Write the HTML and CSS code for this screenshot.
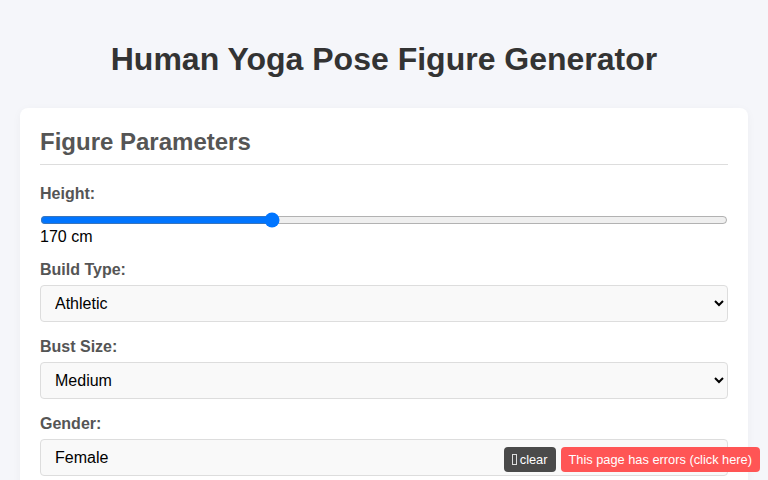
FILE: index.html
```html
<!DOCTYPE html>
<html>
<head>
<meta charset="utf-8">
<title>Human Yoga Pose Figure Generator</title>
<link rel="stylesheet" href="styles.css">
</head>
<body>
<h1 class="title">Human Yoga Pose Figure Generator</h1>
<div class="card">
  <h2 class="card-title">Figure Parameters</h2>
  <div class="group">
    <label class="label" for="height">Height:</label>
    <input class="range" id="height" type="range" min="150" max="210" value="170">
    <span class="value">170 cm</span>
  </div>
  <div class="group">
    <label class="label" for="build">Build Type:</label>
    <select class="select" id="build"><option>Athletic</option></select>
  </div>
  <div class="group">
    <label class="label" for="bust">Bust Size:</label>
    <select class="select" id="bust"><option>Medium</option></select>
  </div>
  <div class="group">
    <label class="label" for="gender">Gender:</label>
    <select class="select" id="gender"><option>Female</option></select>
  </div>
  <div class="group">
    <label class="label" for="pose">Pose:</label>
    <select class="select" id="pose"><option>Tree Pose</option></select>
  </div>
</div>
<div class="errbar">
  <span class="btn btn-clear"><span class="tofu"></span> clear</span>
  <span class="btn btn-err">This page has errors (click here)</span>
</div>
</body>
</html>
```
FILE: styles.css
```css
html, body {
  margin: 0;
}
body {
  padding: 16px 20px 20px;
  background: #f5f6fa;
  font-family: "Liberation Sans", Arial, sans-serif;
  color: #333;
}
.title {
  margin: 25px 0 30px;
  font-size: 32px;
  font-weight: bold;
  text-align: center;
  color: #333;
}
.card {
  background: #fff;
  border-radius: 8px;
  padding: 20px;
  box-shadow: 0 2px 10px rgba(0, 0, 0, 0.04);
}
.card-title {
  margin: 0 0 20px;
  padding-bottom: 8px;
  border-bottom: 1px solid #ddd;
  font-size: 24px;
  color: #555;
}
.group {
  margin-bottom: 16px;
}
.label {
  display: block;
  margin-bottom: 6px;
  font-weight: bold;
  font-size: 16px;
  color: #555;
}
.range {
  display: block;
  width: 100%;
  height: 16px;
  margin: 9px 0 0;
  accent-color: #0075ff;
}
.value {
  display: block;
  font-size: 16px;
  line-height: 17px;
  color: #000;
}
.select {
  display: block;
  width: 100%;
  height: 37px;
  padding: 7px 10px;
  border: 1px solid #ddd;
  border-radius: 4px;
  background: #f9f9f9;
  font-family: "Liberation Sans", Arial, sans-serif;
  font-size: 16px;
  color: #000;
}
.errbar {
  position: fixed;
  right: 8px;
  bottom: 8px;
  display: flex;
  gap: 5px;
}
.btn {
  display: flex;
  align-items: center;
  height: 25px;
  padding: 0 8px;
  border-radius: 4px;
  font-size: 12.8px;
  color: #fff;
}
.btn-clear {
  background: #4a4a4a;
  gap: 3px;
}
.btn-err {
  background: #f55;
}
.tofu {
  display: inline-block;
  width: 3px;
  height: 9px;
  border: 1px solid #ddd;
}
```
